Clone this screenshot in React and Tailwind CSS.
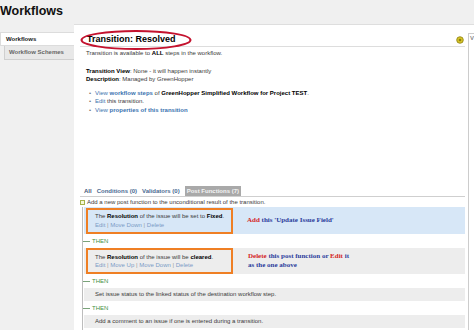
import React from "react";

const link = "text-[#3b73af]";

function Bullet({ children }) {
  return (
    <div className="flex">
      <span className="w-[9px] pl-[3px] text-[#777]">•</span>
      <span>{children}</span>
    </div>
  );
}

function Then() {
  return (
    <div className="h-[14px] flex items-center">
      <span className="w-[7px] h-px bg-[#7aa37a]" />
      <span className="ml-[2px] text-[#3f8f3f]">THEN</span>
    </div>
  );
}

function Actions({ items }) {
  return (
    <div className="text-[#7b9bc6]">
      {items.map((a, i) => (
        <span key={a}>
          {i > 0 && <span className="text-[#999]"> | </span>}
          {a}
        </span>
      ))}
    </div>
  );
}

export default function App() {
  return (
    <div className="w-[474px] h-[330px] overflow-hidden bg-[#f0f0f0] font-['Liberation_Sans',Arial,sans-serif] text-[#3a3a3a]">
      {/* page header */}
      <div className="h-[24px] text-[12.5px] font-bold leading-[22px] text-[#111]">Workflows</div>

      <div className="flex h-[306px]">
        {/* left nav */}
        <aside className="w-[74px] pt-[8px] text-[6px] font-bold">
          <div className="h-[14px] bg-white border-y border-l border-[#dcdcdc] pl-[5px] leading-[12px] text-[#222]">
            Workflows
          </div>
          <div className="ml-[4px] h-[14px] bg-[#e8e8e8] border-l border-b border-[#cfcfcf] pl-[4px] leading-[13px] text-[#666]">
            Workflow Schemes
          </div>
        </aside>

        {/* main panel */}
        <main className="flex-1 flex bg-white border-t border-[#dedede] relative">
          <div className="w-[391px] pl-[6px] text-[6px] leading-[8.5px]">
            {/* title */}
            <div className="mt-[8px] h-[14px] flex items-center justify-between border-b border-[#ddd] pl-[7px] pr-[1px]">
              <span className="text-[9px] font-bold text-black leading-[13px]">Transition: Resolved</span>
              <svg width="8" height="8" viewBox="0 0 8 8">
                <circle cx="4" cy="4" r="3.3" fill="#d8c628" stroke="#8d7f10" strokeWidth="0.8" />
                <circle cx="4" cy="4" r="1.3" fill="#8d7f10" />
              </svg>
            </div>

            <div className="pl-[6px]">
              <div className="mt-[2px]">
                Transition is available to <b className="text-black">ALL</b> steps in the workflow.
              </div>
              <div className="mt-[9px]">
                <b className="text-black">Transition View</b>: None - it will happen instantly
              </div>
              <div>
                <b className="text-black">Description</b>: Managed by GreenHopper
              </div>

              <div className="mt-[5px]">
                <Bullet>
                  <span className={link}>View </span>
                  <b className={link}>workflow steps</b> of{" "}
                  <b className="text-black">GreenHopper Simplified Workflow for Project TEST</b>.
                </Bullet>
                <Bullet>
                  <span className={link}>Edit</span> this transition.
                </Bullet>
                <Bullet>
                  <span className={link}>View </span>
                  <b className={link}>properties of this transition</b>
                </Bullet>
              </div>
            </div>

            {/* tabs */}
            <div className="mt-[72px] h-[11px] flex items-end gap-[5px] pl-[4px] border-b border-[#cfcfcf] font-bold text-[#4a6a92]">
              <span className="pb-[1px] text-[#45597a]">All</span>
              <span className="pb-[1px]">Conditions (0)</span>
              <span className="pb-[1px]">Validators (0)</span>
              <span className="bg-[#a9a9a9] text-[#f4f4f4] px-[2px] h-[10px] leading-[10px]">Post Functions (7)</span>
            </div>

            <div className="h-[10px] flex items-center">
              <span className="w-[5px] h-[5px] border border-[#a6b24a] bg-[#f5f7d8]" />
              <span className="ml-[2px]">Add a new post function to the unconditional result of the transition.</span>
            </div>

            {/* post function tree */}
            <div className="ml-[2px] border-l border-[#bdbdbd] h-[200px]">
              <div className="ml-px h-[27px] bg-[#d7e7f7] flex items-center">
                <div className="ml-[2px] w-[147px] h-[26px] border-2 border-[#ef7f24] pl-[7px] flex flex-col justify-center">
                  <div>
                    The <b className="text-black">Resolution</b> of the issue will be set to{" "}
                    <b className="text-black">Fixed</b>.
                  </div>
                  <Actions items={["Edit", "Move Down", "Delete"]} />
                </div>
                <div className="ml-[14px] font-['Liberation_Serif',serif] font-bold text-[7px] text-[#2b3c9c]">
                  <span className="text-[#d42626]">Add</span> this 'Update Issue Field'
                </div>
              </div>

              <Then />

              <div className="ml-px h-[26px] bg-[#ededed] flex items-center">
                <div className="ml-[2px] w-[147px] h-[26px] border-2 border-[#ef7f24] pl-[7px] flex flex-col justify-center">
                  <div>
                    The <b className="text-black">Resolution</b> of the issue will be{" "}
                    <b className="text-black">cleared</b>.
                  </div>
                  <Actions items={["Edit", "Move Up", "Move Down", "Delete"]} />
                </div>
                <div className="ml-[15px] font-['Liberation_Serif',serif] font-bold text-[7px] leading-[9px] text-[#2b3c9c]">
                  <div>
                    <span className="text-[#d42626]">Delete</span> this post function or{" "}
                    <span className="text-[#d42626]">Edit</span> it
                  </div>
                  <div>as the one above</div>
                </div>
              </div>

              <Then />

              <div className="ml-px h-[13px] bg-[#ededed] flex items-center pl-[11px]">
                Set issue status to the linked status of the destination workflow step.
              </div>

              <Then />

              <div className="ml-px h-[13px] bg-[#ededed] flex items-center pl-[11px]">
                Add a comment to an issue if one is entered during a transition.
              </div>
            </div>
          </div>

          {/* right side panel, cut off */}
          <div className="ml-[3px] flex-1 mt-[8px] border-l border-t border-[#cccccc] bg-white pl-px text-[6px] font-bold text-[#888]">
            V
          </div>

          {/* annotation ellipse around the title */}
          <svg className="absolute left-[5px] top-[4px]" width="114" height="22" viewBox="0 0 114 22">
            <ellipse cx="57" cy="11" rx="54.5" ry="9" fill="none" stroke="#c4122e" strokeWidth="2" />
          </svg>
        </main>
      </div>
    </div>
  );
}
